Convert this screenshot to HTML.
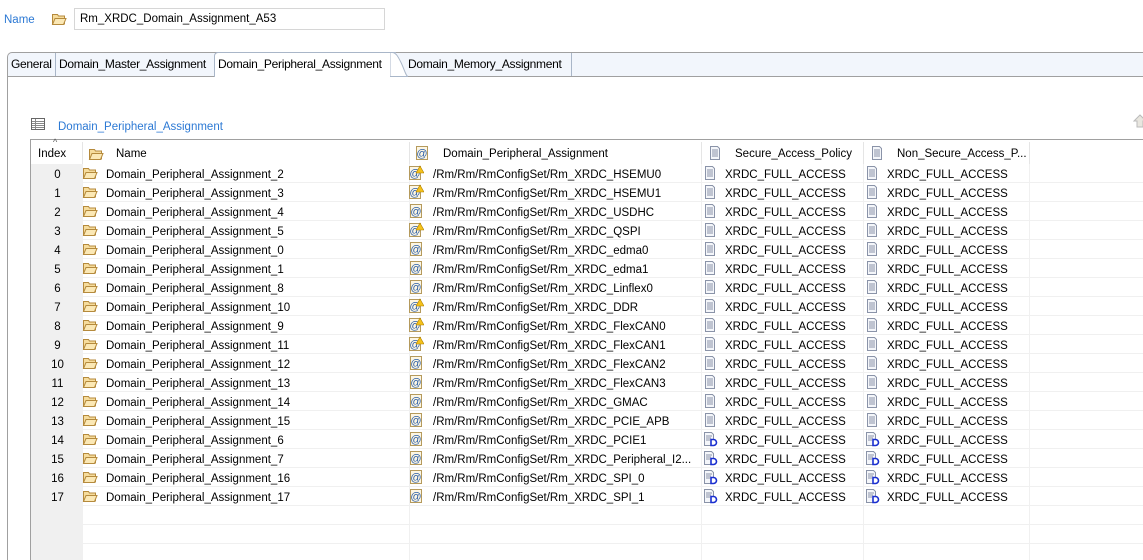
<!DOCTYPE html>
<html><head><meta charset="utf-8"><style>
*{margin:0;padding:0;box-sizing:border-box}
html,body{width:1143px;height:560px;overflow:hidden}
body{background:#fff;font-family:"Liberation Sans",sans-serif;font-size:11.5px;color:#000;position:relative}
.a{position:absolute;white-space:nowrap}
.tab{position:absolute;top:53px;height:23px;line-height:23px;padding-left:3px;border-left:1px solid #a9b6c8;color:#000;font-size:12px;letter-spacing:-0.3px}
.row{position:absolute;left:31px;width:1112px;height:19px;border-bottom:1px solid #f0f0f0}
.c{position:absolute;top:2px;height:18px;line-height:18px;white-space:nowrap}
.i{position:absolute;top:1px;width:16px;height:16px}
.vl{position:absolute;top:164px;height:396px;width:1px;background:#f0f0f0}
</style></head><body>
<svg width="0" height="0" style="position:absolute"><defs>
<symbol id="fold" viewBox="0 0 16 16"><path d="M1.5 3.5h5l1 1.5h6v8h-12z" fill="#f6dc9c" stroke="#b58a3c"/><path d="M1.5 13.5l2.5-6h11l-2.5 6z" fill="#fbe8b5" stroke="#b58a3c"/></symbol>
<symbol id="at" viewBox="0 0 16 16"><rect x="2.5" y="1.5" width="11" height="13" fill="#fdf6e3" stroke="#b59a5c"/><text x="8" y="12" font-size="11" text-anchor="middle" fill="#2a5ea8" font-family="Liberation Sans">@</text></symbol>
<symbol id="atw" viewBox="0 0 16 16"><rect x="1.5" y="1.5" width="11" height="13" fill="#fdf6e3" stroke="#b59a5c"/><text x="7" y="12" font-size="11" text-anchor="middle" fill="#2a5ea8" font-family="Liberation Sans">@</text><path d="M12 1l4 7h-8z" fill="#f5c21a" stroke="#b08000" stroke-width=".6"/></symbol>
<symbol id="doc" viewBox="0 0 16 16"><path d="M3.5 1.5h7l2 2v11h-9z" fill="#f4f6fa" stroke="#8a93a8"/><path d="M5 5h6M5 7h6M5 9h6M5 11h6" stroke="#8a93a8"/></symbol>
<symbol id="docd" viewBox="0 0 16 16"><path d="M2.5 1.5h7l2 2v11h-9z" fill="#f4f6fa" stroke="#8a93a8"/><path d="M4 5h6M4 7h5M4 9h4" stroke="#8a93a8"/><path d="M9 8.5h2.5a3 3 0 0 1 0 6H9z" fill="#fff" stroke="#1a2fd0" stroke-width="1.6"/></symbol>
</defs></svg>

<div class="a" style="left:4px;top:14px;color:#2c79d4">Name</div>
<svg class="a" style="left:51px;top:11px" width="16" height="16"><use href="#fold"/></svg>
<div class="a" style="left:74px;top:8px;width:311px;height:22px;border:1px solid #d6d6d6;padding:4px 5px">Rm_XRDC_Domain_Assignment_A53</div>

<div class="a" style="left:7px;top:52px;width:1140px;height:25px;border-top:1px solid #a0a0a0;border-bottom:1px solid #a0a0a0;border-left:1px solid #a0a0a0;border-radius:5px 0 0 0;background:#f2f6fc"></div>
<div class="tab" style="left:8px;border-left:none">General</div>
<div class="tab" style="left:55px">Domain_Master_Assignment</div>
<div class="a" style="left:214px;top:52px;width:182px;height:25px;background:#fff;border-left:1px solid #a9b6c8;border-top:1px solid #a9b6c8;border-radius:4px 0 0 0"></div>
<svg class="a" style="left:390px;top:52px" width="18" height="25"><path d="M0 0.5h2c4 0 6 4 9 10s5 14 7 14H0z" fill="#fff" stroke="#a9b6c8"/></svg>
<div class="tab" style="left:215px;border:none">Domain_Peripheral_Assignment</div>
<div class="tab" style="left:405px;border:none">Domain_Memory_Assignment</div>
<div class="a" style="left:571px;top:53px;width:1px;height:23px;background:#a9b6c8"></div>
<div class="a" style="left:7px;top:77px;width:1px;height:483px;background:#a0a0a0"></div>

<svg class="a" style="left:30px;top:117px" width="16" height="14"><rect x="1.5" y="1.5" width="13" height="11" fill="#fff" stroke="#666"/><path d="M2 4.5h12M2 6.5h12M2 8.5h12M2 10.5h12M5.5 2v10" stroke="#888"/></svg>
<div class="a" style="left:58px;top:121px;color:#2c79d4">Domain_Peripheral_Assignment</div>
<svg class="a" style="left:1133px;top:114px" width="12" height="14"><path d="M1 7l6-6 6 6h-3v6H4V7z" fill="#e8e6df" stroke="#bbb"/></svg>

<div class="a" style="left:30px;top:139px;width:1113px;height:421px;border-top:1px solid #a0a0a0;border-left:1px solid #a0a0a0"></div>
<div class="a" style="left:31px;top:164px;width:51px;height:396px;background:#f0f0f0"></div>
<div class="vl" style="left:82px"></div><div class="vl" style="left:409px"></div><div class="vl" style="left:701px"></div><div class="vl" style="left:863px"></div><div class="vl" style="left:1029px"></div>
<div class="a" style="left:82px;top:142px;width:1px;height:22px;background:#e5e5e5"></div>
<div class="a" style="left:409px;top:142px;width:1px;height:22px;background:#e5e5e5"></div>
<div class="a" style="left:701px;top:142px;width:1px;height:22px;background:#e5e5e5"></div>
<div class="a" style="left:863px;top:142px;width:1px;height:22px;background:#e5e5e5"></div>
<div class="a" style="left:1029px;top:142px;width:1px;height:22px;background:#e5e5e5"></div>
<div class="a" style="left:53px;top:137px;font-size:9px;color:#555">^</div>
<div class="a" style="left:38px;top:148px">Index</div>
<svg class="a" style="left:88px;top:146px" width="16" height="16"><use href="#fold"/></svg>
<div class="a" style="left:116px;top:148px">Name</div>
<svg class="a" style="left:414px;top:145px" width="16" height="16"><use href="#at"/></svg>
<div class="a" style="left:443px;top:148px">Domain_Peripheral_Assignment</div>
<svg class="a" style="left:707px;top:145px" width="16" height="16"><use href="#doc"/></svg>
<div class="a" style="left:735px;top:148px">Secure_Access_Policy</div>
<svg class="a" style="left:869px;top:145px" width="16" height="16"><use href="#doc"/></svg>
<div class="a" style="left:897px;top:148px">Non_Secure_Access_P...</div>

<div id="rows"></div>
<script>
var n=[2,3,4,5,0,1,8,10,9,11,12,13,14,15,6,7,16,17];
var p=["HSEMU0","HSEMU1","USDHC","QSPI","edma0","edma1","Linflex0","DDR","FlexCAN0","FlexCAN1","FlexCAN2","FlexCAN3","GMAC","PCIE_APB","PCIE1","Peripheral_I2...","SPI_0","SPI_1"];
var w=[0,1,3,7,8,9];var h="";
for(var i=0;i<21;i++){var y=164+i*19;h+='<div class="row" style="top:'+y+'px">';
if(i<18){var at=w.indexOf(i)>=0?"atw":"at";var d=i>=14?"docd":"doc";
h+='<div class="c" style="left:0;width:51px;text-align:center;padding-left:2px">'+i+'</div>'+
'<svg class="i" style="left:51px" viewBox="0 0 16 16"><use href="#fold"/></svg>'+
'<div class="c" style="left:75px">Domain_Peripheral_Assignment_'+n[i]+'</div>'+
'<svg class="i" style="left:377px" viewBox="0 0 16 16"><use href="#'+at+'"/></svg>'+
'<div class="c" style="left:402px">/Rm/Rm/RmConfigSet/Rm_XRDC_'+p[i]+'</div>'+
'<svg class="i" style="left:671px" viewBox="0 0 16 16"><use href="#'+d+'"/></svg>'+
'<div class="c" style="left:694px">XRDC_FULL_ACCESS</div>'+
'<svg class="i" style="left:833px" viewBox="0 0 16 16"><use href="#'+d+'"/></svg>'+
'<div class="c" style="left:856px">XRDC_FULL_ACCESS</div>';}
h+='</div>';}
document.getElementById("rows").innerHTML=h;
</script>
</body></html>
